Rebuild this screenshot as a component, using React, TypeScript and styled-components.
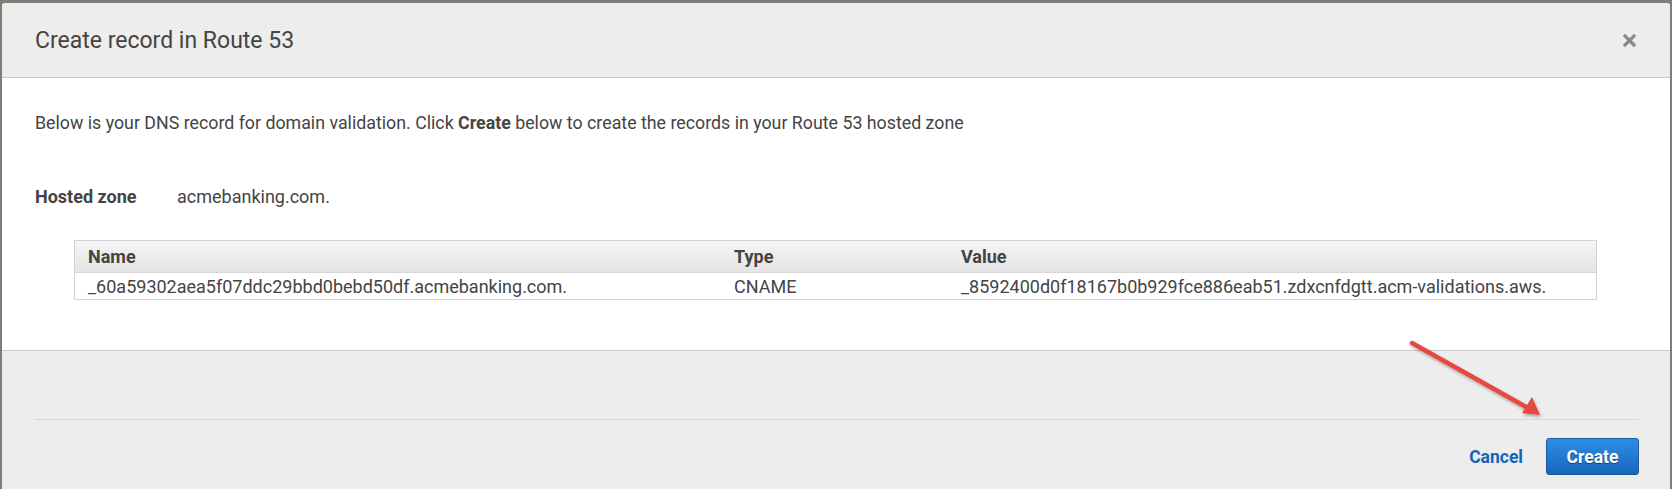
import styled, { createGlobalStyle } from "styled-components";

const GlobalStyle = createGlobalStyle`
  html, body {
    margin: 0;
    padding: 0;
    background: #7e7d76;
  }
  body {
    font-family: Roboto, "Liberation Sans", Arial, sans-serif;
    color: #444;
  }
`;

const Overlay = styled.div`
  position: relative;
  height: 489px;
  padding: 3px 2px 0 2px;
  box-sizing: border-box;
  overflow: hidden;
`;

const Modal = styled.div`
  display: flex;
  flex-direction: column;
  height: 100%;
  background: #ededed;
  border-radius: 3px 3px 0 0;
  overflow: hidden;
`;

const Header = styled.div`
  display: flex;
  align-items: center;
  justify-content: space-between;
  height: 75px;
  padding: 0 33px 0 33px;
  background: #ededed;
  border-bottom: 1px solid #c8c8c8;
  box-sizing: border-box;
`;

const Title = styled.h2`
  margin: 0;
  font-size: 23px;
  font-weight: 400;
  color: #444;
`;

const CloseButton = styled.button`
  display: flex;
  align-items: center;
  justify-content: center;
  width: 16px;
  height: 16px;
  padding: 0;
  border: 0;
  background: transparent;
  cursor: pointer;
`;

const Body = styled.div`
  background: #fff;
  padding: 33px 33px 50px 33px;
  border-bottom: 1px solid #c8c8c8;
`;

const Paragraph = styled.p`
  margin: 0;
  font-size: 17.8px;
  line-height: 24px;
  color: #444;
`;

const ZoneRow = styled.div`
  display: flex;
  margin-top: 50px;
  font-size: 18px;
  line-height: 24px;
`;

const ZoneLabel = styled.span`
  width: 142px;
  font-weight: 700;
  color: #444;
`;

const ZoneValue = styled.span`
  color: #444;
`;

const Table = styled.div`
  display: grid;
  grid-template-columns: 646px 227px 1fr;
  width: 1523px;
  margin: 31px 0 0 39px;
  border: 1px solid #d3d3d3;
  box-sizing: border-box;
  font-size: 18px;
`;

const HeadCell = styled.div`
  height: 31px;
  display: flex;
  align-items: center;
  padding-left: 13px;
  font-weight: 700;
  color: #444;
  background: linear-gradient(#f5f5f5, #e4e4e4);
  border-bottom: 1px solid #d8d8d8;
`;

const Cell = styled.div`
  height: 26px;
  display: flex;
  align-items: center;
  padding-left: 13px;
  color: #444;
  white-space: nowrap;
`;

const Footer = styled.div`
  flex: 1;
  padding: 68px 31px 0 33px;
`;

const Divider = styled.div`
  height: 1px;
  background: #d8d8d8;
`;

const Actions = styled.div`
  display: flex;
  justify-content: flex-end;
  align-items: center;
  gap: 23px;
  margin-top: 18px;
`;

const LinkButton = styled.button`
  border: 0;
  background: transparent;
  padding: 0;
  font-family: inherit;
  font-size: 17.5px;
  font-weight: 700;
  color: #1166bb;
  cursor: pointer;
`;

const PrimaryButton = styled.button`
  width: 93px;
  height: 37px;
  border: 1px solid #1d5a9e;
  border-radius: 3px;
  background: linear-gradient(#2e8de6, #1966bd);
  color: #fff;
  font-family: inherit;
  font-size: 17.5px;
  font-weight: 700;
  text-shadow: 0 1px 1px rgba(0, 0, 0, 0.45);
  cursor: pointer;
`;

const Annotation = styled.svg`
  position: absolute;
  left: 1400px;
  top: 335px;
  pointer-events: none;
`;

const rows = [
  {
    name: "_60a59302aea5f07ddc29bbd0bebd50df.acmebanking.com.",
    type: "CNAME",
    value: "_8592400d0f18167b0b929fce886eab51.zdxcnfdgtt.acm-validations.aws.",
  },
];

export default function App() {
  return (
    <>
      <GlobalStyle />
      <Overlay>
        <Modal>
          <Header>
            <Title>Create record in Route 53</Title>
            <CloseButton aria-label="Close">
              <svg width="13" height="13" viewBox="0 0 13 13">
                <path
                  d="M2 2 L11 11 M11 2 L2 11"
                  stroke="#8a8a8a"
                  strokeWidth="3.2"
                  strokeLinecap="square"
                />
              </svg>
            </CloseButton>
          </Header>
          <Body>
            <Paragraph>
              Below is your DNS record for domain validation. Click <b>Create</b> below to
              create the records in your Route 53 hosted zone
            </Paragraph>
            <ZoneRow>
              <ZoneLabel>Hosted zone</ZoneLabel>
              <ZoneValue>acmebanking.com.</ZoneValue>
            </ZoneRow>
            <Table>
              <HeadCell>Name</HeadCell>
              <HeadCell>Type</HeadCell>
              <HeadCell>Value</HeadCell>
              {rows.map((r) => (
                <>
                  <Cell>{r.name}</Cell>
                  <Cell>{r.type}</Cell>
                  <Cell>{r.value}</Cell>
                </>
              ))}
            </Table>
          </Body>
          <Footer>
            <Divider />
            <Actions>
              <LinkButton>Cancel</LinkButton>
              <PrimaryButton>Create</PrimaryButton>
            </Actions>
          </Footer>
        </Modal>
        <Annotation width="160" height="100" viewBox="0 0 160 100">
          <defs>
            <filter id="shadow" x="-20%" y="-20%" width="140%" height="140%">
              <feDropShadow dx="1" dy="2" stdDeviation="1.5" floodColor="#000" floodOpacity="0.3" />
            </filter>
          </defs>
          <g filter="url(#shadow)">
            <line
              x1="12"
              y1="8"
              x2="128"
              y2="73"
              stroke="#e5483f"
              strokeWidth="4.5"
              strokeLinecap="round"
            />
            <polygon points="140,80 122,78 132,62" fill="#e5483f" />
          </g>
        </Annotation>
      </Overlay>
    </>
  );
}
